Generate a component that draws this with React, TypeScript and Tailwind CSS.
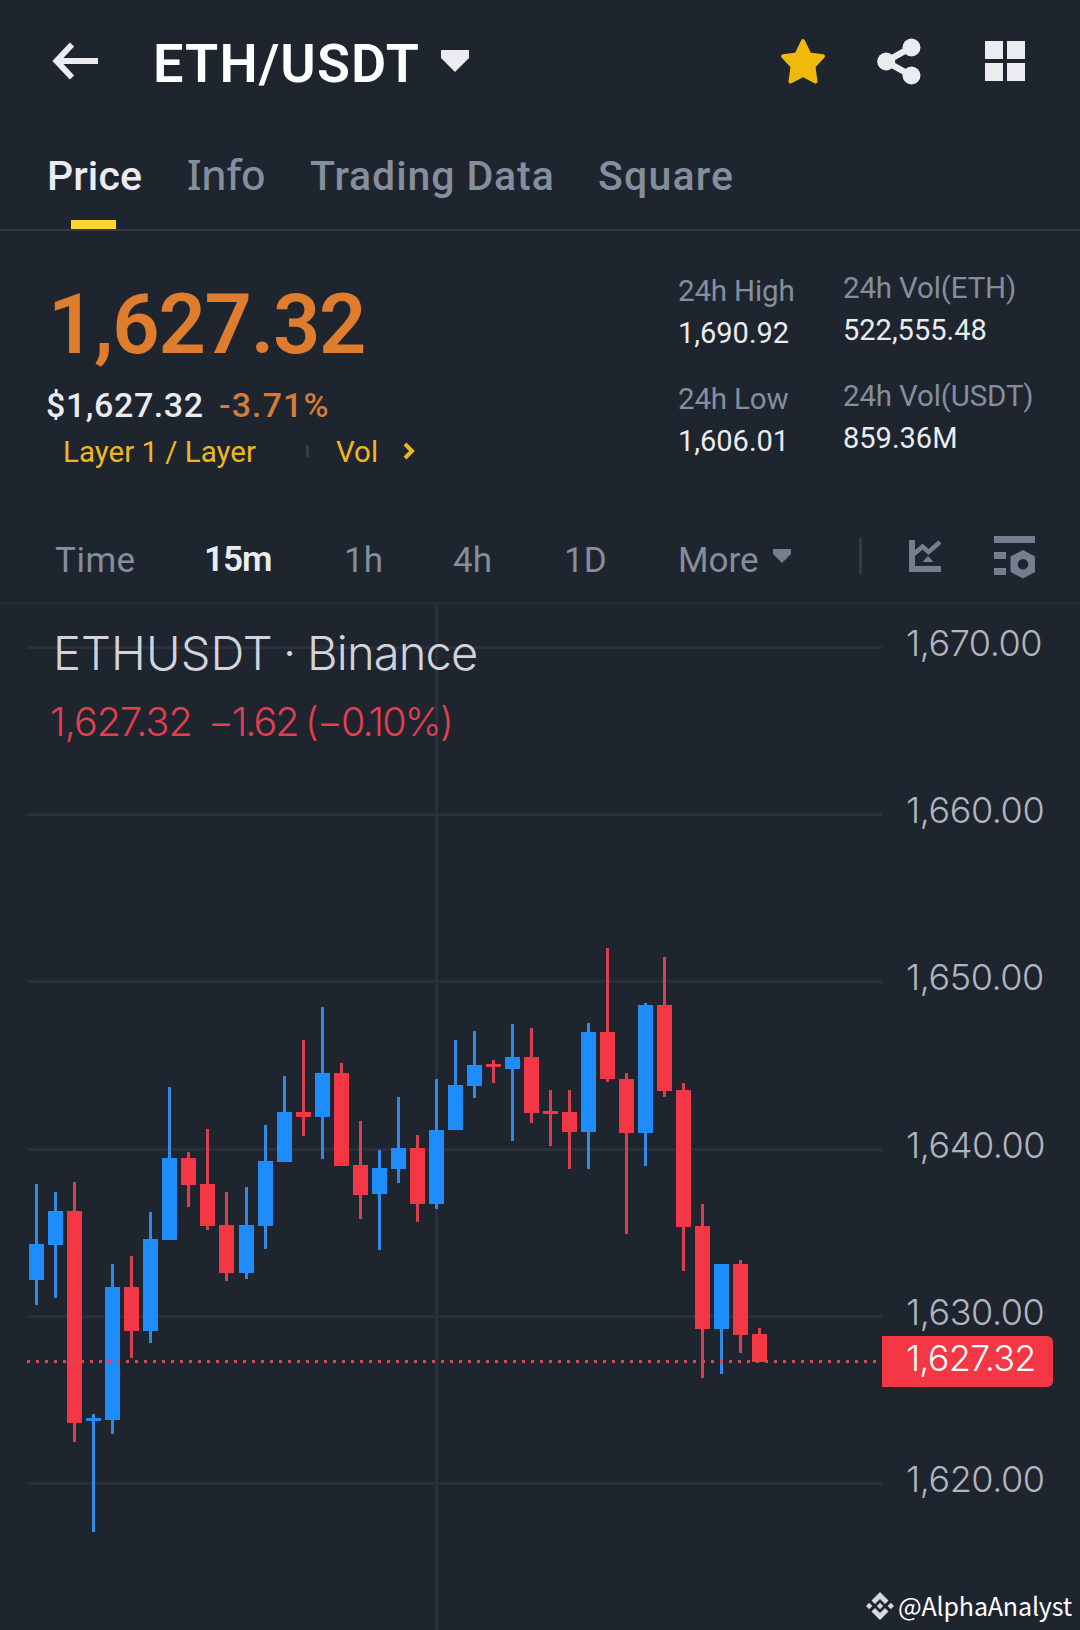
import clsx from "clsx";

interface Candle {
  x: number;
  up: boolean;
  open: number;
  close: number;
  high: number;
  low: number;
}

// [up, body top, body bottom, wick top, wick bottom]
const series: [number, number, number, number, number][] = [
  [1, 1244, 1280, 1184, 1305],
  [1, 1211, 1245, 1192, 1298],
  [0, 1211, 1423, 1182, 1442],
  [1, 1418, 1421, 1414, 1532],
  [1, 1287, 1420, 1264, 1434],
  [0, 1287, 1331, 1256, 1358],
  [1, 1239, 1331, 1212, 1343],
  [1, 1158, 1240, 1087, 1240],
  [0, 1158, 1185, 1152, 1207],
  [0, 1184, 1226, 1129, 1230],
  [0, 1225, 1273, 1192, 1281],
  [1, 1225, 1273, 1187, 1279],
  [1, 1161, 1226, 1125, 1249],
  [1, 1112, 1162, 1076, 1162],
  [0, 1112, 1117, 1040, 1136],
  [1, 1073, 1117, 1007, 1159],
  [0, 1073, 1166, 1063, 1166],
  [0, 1165, 1195, 1121, 1219],
  [1, 1168, 1194, 1150, 1250],
  [1, 1148, 1169, 1097, 1183],
  [0, 1148, 1204, 1135, 1222],
  [1, 1130, 1204, 1079, 1209],
  [1, 1085, 1130, 1040, 1130],
  [1, 1065, 1086, 1031, 1098],
  [0, 1064, 1067, 1060, 1083],
  [1, 1057, 1069, 1024, 1141],
  [0, 1057, 1113, 1028, 1123],
  [0, 1111, 1114, 1090, 1146],
  [0, 1112, 1132, 1090, 1169],
  [1, 1032, 1132, 1023, 1169],
  [0, 1032, 1079, 948, 1082],
  [0, 1079, 1133, 1073, 1234],
  [1, 1005, 1133, 1003, 1166],
  [0, 1005, 1091, 957, 1097],
  [0, 1090, 1227, 1083, 1271],
  [0, 1226, 1329, 1204, 1378],
  [1, 1264, 1329, 1264, 1374],
  [0, 1264, 1335, 1260, 1353],
  [0, 1334, 1362, 1328, 1362],
];

const candles: Candle[] = series.map(([up, open, close, high, low], i) => ({
  x: 29 + i * 19 + (i > 10 ? 1 : 0),
  up: up === 1,
  open,
  close,
  high,
  low,
}));

const gridLines = [646, 813, 980, 1148, 1315, 1482];
const axisLabels = ["1,670.00", "1,660.00", "1,650.00", "1,640.00", "1,630.00", "1,620.00"];

function Header() {
  return (
    <header className="flex h-[122px] items-center pl-[52px]">
      <svg width="47" height="38" viewBox="0 0 47 38" fill="none" stroke="#eaecef" strokeWidth="6">
        <path d="M46 19H5M20 2.5L4.5 19L20 35.5" />
      </svg>
      <h1 className="mt-[6px] ml-[54px] w-[288px] text-[54px] leading-none font-semibold tracking-[1.1px] whitespace-nowrap text-white">
        ETH/USDT
      </h1>
      <svg width="28" height="22" viewBox="0 0 28 22" fill="#eaecef">
        <path d="M0 0H28V8L14 22L0 8Z" />
      </svg>
      <svg className="ml-[310px]" width="48" height="48" viewBox="0 0 48 48">
        <path
          d="M24 4L30.5 17.5L44 19.2L34.5 29.5L36.5 44.5L24 38L11.5 44.5L13.5 29.5L4 19.2L17.5 17.5Z"
          fill="#f0b90b"
          stroke="#f0b90b"
          strokeWidth="4"
          strokeLinejoin="round"
        />
      </svg>
      <svg className="ml-[50px]" width="44" height="47" viewBox="0 0 44 47" fill="#eaecef">
        <path d="M9 23.5L34 9.5M9 23.5L34 37.5" stroke="#eaecef" strokeWidth="6.5" />
        <circle cx="9.2" cy="23.5" r="9" />
        <circle cx="34.5" cy="9.5" r="9" />
        <circle cx="34.5" cy="37.5" r="9" />
      </svg>
      <div className="ml-[64px] grid grid-cols-2 gap-[4px]">
        <div className="size-[18px] bg-[#eaecef]" />
        <div className="size-[18px] bg-[#eaecef]" />
        <div className="size-[18px] bg-[#eaecef]" />
        <div className="size-[18px] bg-[#eaecef]" />
      </div>
    </header>
  );
}

function Tabs() {
  return (
    <nav className="flex h-[109px] items-start border-b-2 border-[#333a45] pt-[34px] pl-[47px] text-[41px] leading-none font-medium tracking-[0.9px] whitespace-nowrap text-[#848e9c]">
      <div className="w-[139px]">
        <div className="tracking-[0.1px] text-[#eaecef]">Price</div>
        <div className="mt-[23px] ml-[24px] h-[9px] w-[45px] bg-[#fcd535]" />
      </div>
      <div className="-mt-[2px] w-[124px] pl-[1px] font-['Noto_Sans',sans-serif] tracking-[-0.4px]">Info</div>
      <div className="w-[288px]">Trading Data</div>
      <div className="tracking-[1.2px]">Square</div>
    </nav>
  );
}

interface StatProps {
  label: string;
  value: string;
  className?: string;
}

function Stat({ label, value, className }: StatProps) {
  return (
    <div className={clsx("whitespace-nowrap", className)}>
      <div className="text-[29.5px] leading-[30px] tracking-[-0.15px] text-[#848e9c]">{label}</div>
      <div className="mt-[13px] text-[29px] leading-[28px] text-[#eaecef]">{value}</div>
    </div>
  );
}

function Summary() {
  return (
    <section className="flex h-[274px]">
      <div className="w-[678px] pt-[52px] pl-[46px] leading-none whitespace-nowrap">
        <div className="ml-[2px] text-[83px] leading-[83px] font-semibold tracking-[-1.3px] text-[#df7d2e]">1,627.32</div>
        <div className="mt-[22px] flex text-[34px] leading-[34px] font-medium">
          <span className="w-[173px] tracking-[0.6px] text-[#eaecef]">$1,627.32</span>
          <span className="tracking-[1.1px] text-[#d47c38]">-3.71%</span>
        </div>
        <div className="mt-[15px] flex text-[29.5px] leading-[30px] text-[#ecb822]">
          <span className="ml-[17px] w-[243px]">Layer 1 / Layer</span>
          <span className="mt-[8px] h-[12px] w-[3px] bg-[#333a45]" />
          <span className="ml-[27px] w-[67px]">Vol</span>
          <svg className="mt-[5px]" width="13" height="18" viewBox="0 0 13 18" fill="none" stroke="#ecb822" strokeWidth="4">
            <path d="M2 2L9 9L2 16" />
          </svg>
        </div>
      </div>
      <div className="w-[165px] pt-[45px]">
        <Stat label="24h High" value="1,690.92" />
        <Stat label="24h Low" value="1,606.01" className="mt-[37px]" />
      </div>
      <div className="pt-[42px]">
        <Stat label="24h Vol(ETH)" value="522,555.48" />
        <Stat label="24h Vol(USDT)" value="859.36M" className="mt-[37px]" />
      </div>
    </section>
  );
}

function Timeframes() {
  return (
    <div className="flex h-[100px] items-start border-b-[3px] border-[#282c36] pl-[55px] text-[35px] leading-none whitespace-nowrap text-[#848e9c]">
      <span className="mt-[38px] w-[149px] tracking-[0.5px]">Time</span>
      <span className="mt-[37px] w-[140px] font-semibold tracking-[-1px] text-[#eaecef]">15m</span>
      <span className="mt-[38px] w-[109px]">1h</span>
      <span className="mt-[38px] w-[111px]">4h</span>
      <span className="mt-[38px] w-[114px]">1D</span>
      <span className="mt-[38px] w-[95px]">More</span>
      <svg className="mt-[44px]" width="18" height="14" viewBox="0 0 18 14" fill="#767d8f">
        <path d="M0 0H18V5L9 14L0 5Z" />
      </svg>
      <span className="mt-[33px] ml-[68px] h-[36px] w-[3px] bg-[#333a45]" />
      <svg className="mt-[35px] ml-[47px]" width="33" height="33" viewBox="0 0 33 33" fill="#767d8f">
        <path d="M0 0H6V26H32V32H0Z" />
        <path d="M5 14L13.5 6.5L19.5 12L31 2" fill="none" stroke="#767d8f" strokeWidth="4.5" />
        <path d="M19 16L24.5 22H13.5Z" />
      </svg>
      <svg className="mt-[31px] ml-[52px]" width="42" height="43" viewBox="0 0 42 43" fill="#767d8f">
        <path d="M0 0H41V7H0ZM0 16H12V23H0ZM0 32H12V39H0Z" />
        <path
          fillRule="evenodd"
          d="M29 14L41 20.5V36L29 42.5L16.5 36V20.5ZM29 23A5.3 5.3 0 1 0 29 33.6A5.3 5.3 0 1 0 29 23Z"
        />
      </svg>
    </div>
  );
}

function Chart() {
  return (
    <section className="relative flex h-[1025px] font-['Inter',sans-serif] font-light">
      <svg width="882" height="1025" viewBox="0 605 882 1025" shapeRendering="crispEdges">
        {gridLines.map((y) => (
          <rect key={y} x="27" y={y} width="855" height="3" fill="#2a2f39" />
        ))}
        <rect x="435" y="605" width="3" height="1025" fill="#2a2f39" />
        {candles.map((c) => (
          <g key={c.x}>
            <rect x={c.x + 6} y={c.high} width="3" height={c.low - c.high} fill={c.up ? "#328ae4" : "#d93f50"} />
            <rect x={c.x} y={c.open} width="15" height={c.close - c.open} fill={c.up ? "#1e8dfb" : "#f33745"} />
          </g>
        ))}
        <path d="M27 1361.5H879" stroke="#d04a58" strokeWidth="3" strokeDasharray="3 6" />
      </svg>
      <div className="absolute top-0 left-[50px] whitespace-nowrap">
        <div className="mt-[24px] ml-[3px] flex text-[47px] leading-none text-[#d1d4dc]">
          <span className="w-[230px] tracking-[0.1px]">ETHUSDT</span>
          <span className="w-[24px]">·</span>
          <span className="tracking-[-0.8px]">Binance</span>
        </div>
        <div className="mt-[27px] flex text-[39.5px] leading-none tracking-[-0.9px] text-[#e23f50]">
          <span className="w-[158px]">1,627.32</span>
          <span className="w-[97px] tracking-[-2px]">−1.62</span>
          <span className="tracking-[-1.8px]">(−0.10%)</span>
        </div>
      </div>
      <div className="w-[198px] pt-[20px] pl-[24px] text-[36px] tracking-[-0.45px] text-[#b2b5be]">
        {axisLabels.map((label) => (
          <div key={label} className="h-[167.2px] leading-none">
            {label}
          </div>
        ))}
      </div>
      <div className="absolute top-[731px] left-[882px] h-[51px] w-[171px] rounded-r-[6px] bg-[#f33745] pt-[4px] pl-[24px] text-[36px] leading-none tracking-[-0.8px] text-white">
        1,627.32
      </div>
      <div className="absolute right-[8px] bottom-[8px] flex items-center gap-[4px] font-['Noto_Sans_CJK_SC',sans-serif] text-[25px] leading-[34px] font-normal tracking-[-0.15px] text-white">
        <svg width="28" height="28" viewBox="0 0 28 28" fill="#d6d9e0">
          <path d="M14 0L22.5 8.5L19 12L14 7L9 12L5.5 8.5Z" />
          <path d="M14 28L22.5 19.5L19 16L14 21L9 16L5.5 19.5Z" />
          <path d="M14 10.8L17.2 14L14 17.2L10.8 14Z" />
          <path d="M3.2 10.8L6.4 14L3.2 17.2L0 14Z" />
          <path d="M24.8 10.8L28 14L24.8 17.2L21.6 14Z" />
        </svg>
        <span className="-mt-[2px]">@AlphaAnalyst</span>
      </div>
    </section>
  );
}

export default function App() {
  return (
    <main className="h-[1630px] w-[1080px] overflow-hidden bg-[#1f252f] font-['Roboto',sans-serif]">
      <Header />
      <Tabs />
      <Summary />
      <Timeframes />
      <Chart />
    </main>
  );
}
